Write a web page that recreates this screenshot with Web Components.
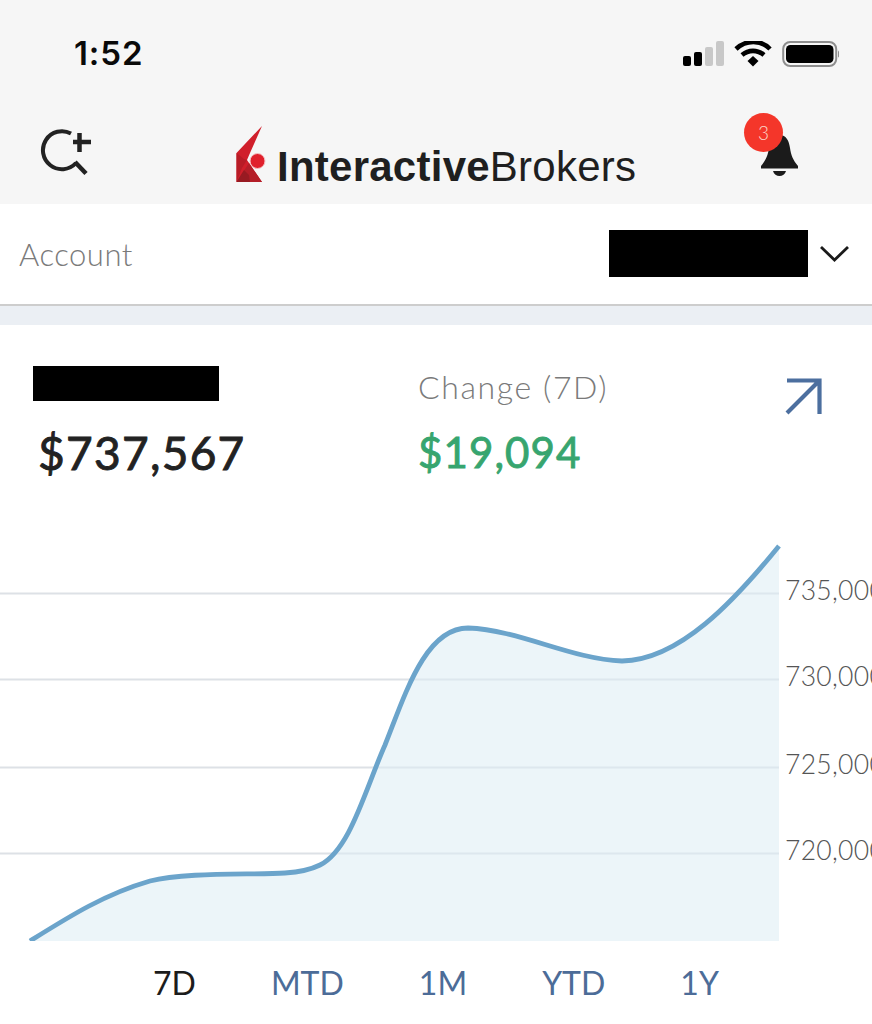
<!DOCTYPE html>
<html><head><meta charset="utf-8"><style>
html,body{margin:0;padding:0;background:#fff}
body{width:872px;height:1024px;overflow:hidden;font-family:Lato,"Liberation Sans",sans-serif}
</style></head><body>
<ib-app></ib-app>
<script>
function def(name, html){
  customElements.define(name, class extends HTMLElement{
    constructor(){super();this.attachShadow({mode:'open'}).innerHTML=html;}
  });
}
def('ib-status-bar',`<style>
:host{display:flex;height:100px;box-sizing:border-box;padding:34px 33px 0 74px;justify-content:space-between;align-items:flex-start}
.t{font:600 33px/38px Inter,Roboto,sans-serif;color:#0a0a0a;letter-spacing:.9px}
svg{display:block;margin-top:7px}
</style><div class="t">1:52</div>
<svg width="156" height="28" viewBox="0 0 156 28">
<rect x="0" y="15" width="8" height="10" rx="2" fill="#000"/>
<rect x="11" y="11" width="8" height="14" rx="2" fill="#000"/>
<rect x="22" y="6" width="8" height="19" rx="2" fill="#c8c8c8"/>
<rect x="33" y="0" width="8" height="25" rx="2" fill="#c8c8c8"/>
<path d="M53 8C63 -1.500 78 -1.500 87 8" fill="none" stroke="#000" stroke-width="4.600"/>
<path d="M59 14C65.500 8.500 74.500 8.500 81 14" fill="none" stroke="#000" stroke-width="4.600"/>
<path d="M64.500 20L70 15L75.500 20L70 25.500Z" fill="#000"/>
<rect x="100.200" y="1" width="53" height="24" rx="7" fill="none" stroke="#8e8e8e" stroke-width="2"/>
<rect x="103" y="4" width="47.500" height="18" rx="4.500" fill="#000"/>
<path d="M155 9.500c1 .5 1.500 2 1.500 3.500s-.5 3-1.500 3.500z" fill="#8e8e8e"/>
</svg>`);
def('ib-logo',`<style>
:host{display:flex;align-items:flex-end;gap:11px}
.w{font:400 42px/40px "Liberation Sans",Arial,sans-serif;color:#1f1f1f;letter-spacing:.25px;white-space:nowrap;margin-bottom:-5px}
b{font-weight:700}
svg{display:block}
</style><svg width="30" height="56" viewBox="0 0 30 56">
<path d="M26 0L0.500 27V56H26L11 34L14 27Z" fill="#d01f2b"/>
<path d="M0.500 27L8 33L11 34L6 42L0.500 56Z" fill="#b81c26"/>
<path d="M0.500 56L13 37L26 56Z" fill="#b41e28"/>
<path d="M0.500 56L8 44L13 49L14 56Z" fill="#981a22"/>
<circle cx="21.500" cy="35" r="7.500" fill="#e0202c" stroke="#f5c4c6" stroke-width="1"/>
</svg><div class="w"><b>Interactive</b>Brokers</div>`);
def('ib-header',`<style>
:host{display:flex;height:104px;box-sizing:border-box;padding:24px 68px 0 40px;align-items:flex-start;position:relative}
.c{position:relative;width:62px;height:68px;margin-top:-13px;margin-left:auto}
.b{position:absolute;left:2px;top:2px;width:39px;height:39px;border-radius:50%;background:#f4362a;color:#fbd7c8;font:300 19px/39px Lato,sans-serif;text-align:center}
svg{display:block}
.l{margin-top:2px;margin-left:142px}
</style><svg width="54" height="54" viewBox="0 0 54 54" style="margin-top:5px">
<path d="M31 4.500A19 19 0 1 0 36 34" fill="none" stroke="#222" stroke-width="4"/>
<path d="M35 33L46 44.500" stroke="#222" stroke-width="4.500" fill="none"/>
<path d="M39.500 4V23M33 13H51" stroke="#222" stroke-width="4.500" fill="none"/>
</svg>
<ib-logo class="l"></ib-logo>
<div class="c"><svg width="62" height="68" viewBox="0 0 62 68">
<path d="M37.500 24c7 0 9.500 6 10.500 13c1 7 3 12 8 18v2.500H19V55c5-6 7-11 8-18c1-7 3.500-13 10.500-13Z" fill="#1b1b1b"/>
<path d="M31 60h13c-1 3.500-3.500 5-6.500 5s-5.500-1.500-6.500-5Z" fill="#1b1b1b"/></svg>
<div class="b">3</div></div>`);
def('ib-account-row',`<style>
:host{display:flex;height:102px;box-sizing:border-box;border-bottom:2px solid #cdcdcd;background:#fff;align-items:center;padding:0 22px 2px 19px}
.l{font:300 31px/36px Lato,sans-serif;color:#7a7a7a;letter-spacing:.5px;flex:1;margin-top:1px}
.r{width:199px;height:47px;background:#000;margin-top:1px}
svg{margin-left:11px;display:block;margin-top:2px}
</style><div class="l">Account</div><div class="r"></div>
<svg width="31" height="20" viewBox="0 0 31 20"><path d="M2 3L15.500 16L29 3" fill="none" stroke="#1a1a1a" stroke-width="2.800"/></svg>`);
def('ib-stat',`<style>
:host{display:flex;flex-direction:column;align-items:flex-start}
.v{font:400 var(--fs,46px)/52px Lato,sans-serif;letter-spacing:var(--ls,1.3px);color:var(--c,#222);margin-top:var(--mt,26px);margin-left:var(--ml,0);-webkit-text-stroke:.9px var(--c,#222)}
</style><slot name="label"></slot><div class="v"><slot></slot></div>`);
def('ib-summary',`<style>
:host{display:flex;box-sizing:border-box;height:187px;padding:41px 49px 0 33px;background:#fff;align-items:flex-start}
.bar{width:186px;height:35px;background:#000;display:block}
.a{width:385px}
.b{flex:1}
.lab{display:block;font:300 32px/44px Lato,sans-serif;color:#7a7a7a;letter-spacing:1.600px;margin-top:-1px;height:35px}
svg{display:block;margin-top:12px}
.a{--ml:5px;--mt:26px}
.b{--c:#37a56f;--mt:26px;--fs:42px;--ls:1.1px}
</style>
<ib-stat class="a"><span slot="label" class="bar"></span>$737,567</ib-stat>
<ib-stat class="b"><span slot="label" class="lab">Change (7D)</span>$19,094</ib-stat>
<svg width="38" height="38" viewBox="0 0 38 38"><path d="M2 2.500H34.500V36M34.500 2.500L2 35" fill="none" stroke="#4c6f9f" stroke-width="4.200"/></svg>`);
def('ib-chart',`<style>
:host{display:block;height:429px;overflow:hidden}
svg{display:block}
text{font:300 26.500px Lato,sans-serif;fill:#555;letter-spacing:.3px}
</style><svg width="872" height="429" viewBox="0 512 872 429">
<g stroke="#dde1e6" stroke-width="2"><path d="M0 593.500H779M0 679.500H779M0 767.500H779M0 853.500H779"/></g>
<path d="M30 941C70 916 105 894 150 881C185 872 250 875 285 873C300 872 312 869 320 865C350 850 365 790 385 745C405 695 425 628 468 628C520 630 570 659 622 661C680 660 735 600 779 546V941Z" fill="#dcecf4" fill-opacity=".55"/>
<path d="M30 941C70 916 105 894 150 881C185 872 250 875 285 873C300 872 312 869 320 865C350 850 365 790 385 745C405 695 425 628 468 628C520 630 570 659 622 661C680 660 735 600 779 546" fill="none" stroke="#6ba4cb" stroke-width="4.800"/>
<text x="785" y="600">735,000</text><text x="785" y="686">730,000</text><text x="785" y="774">725,000</text><text x="785" y="860">720,000</text>
</svg>`);
def('ib-range-tabs',`<style>
:host{display:flex;gap:75px;padding:23px 0 0 153px}
</style><slot></slot>`);
def('ib-tab',`<style>
:host{display:block;font:400 32px/38px Lato,sans-serif;color:#4c6c98;white-space:nowrap}
:host([active]){color:#1c1c1c}
</style><slot></slot>`);
def('ib-app',`<style>
:host{display:block;width:872px;height:1024px;overflow:hidden;background:#fff}
.top{background:#f6f6f6}
.band{height:19px;background:#ebeff4}
</style>
<div class="top"><ib-status-bar></ib-status-bar><ib-header></ib-header></div>
<ib-account-row></ib-account-row><div class="band"></div>
<ib-summary></ib-summary><ib-chart></ib-chart>
<ib-range-tabs><ib-tab active>7D</ib-tab><ib-tab>MTD</ib-tab><ib-tab>1M</ib-tab><ib-tab>YTD</ib-tab><ib-tab>1Y</ib-tab></ib-range-tabs>`);
</script></body></html>
